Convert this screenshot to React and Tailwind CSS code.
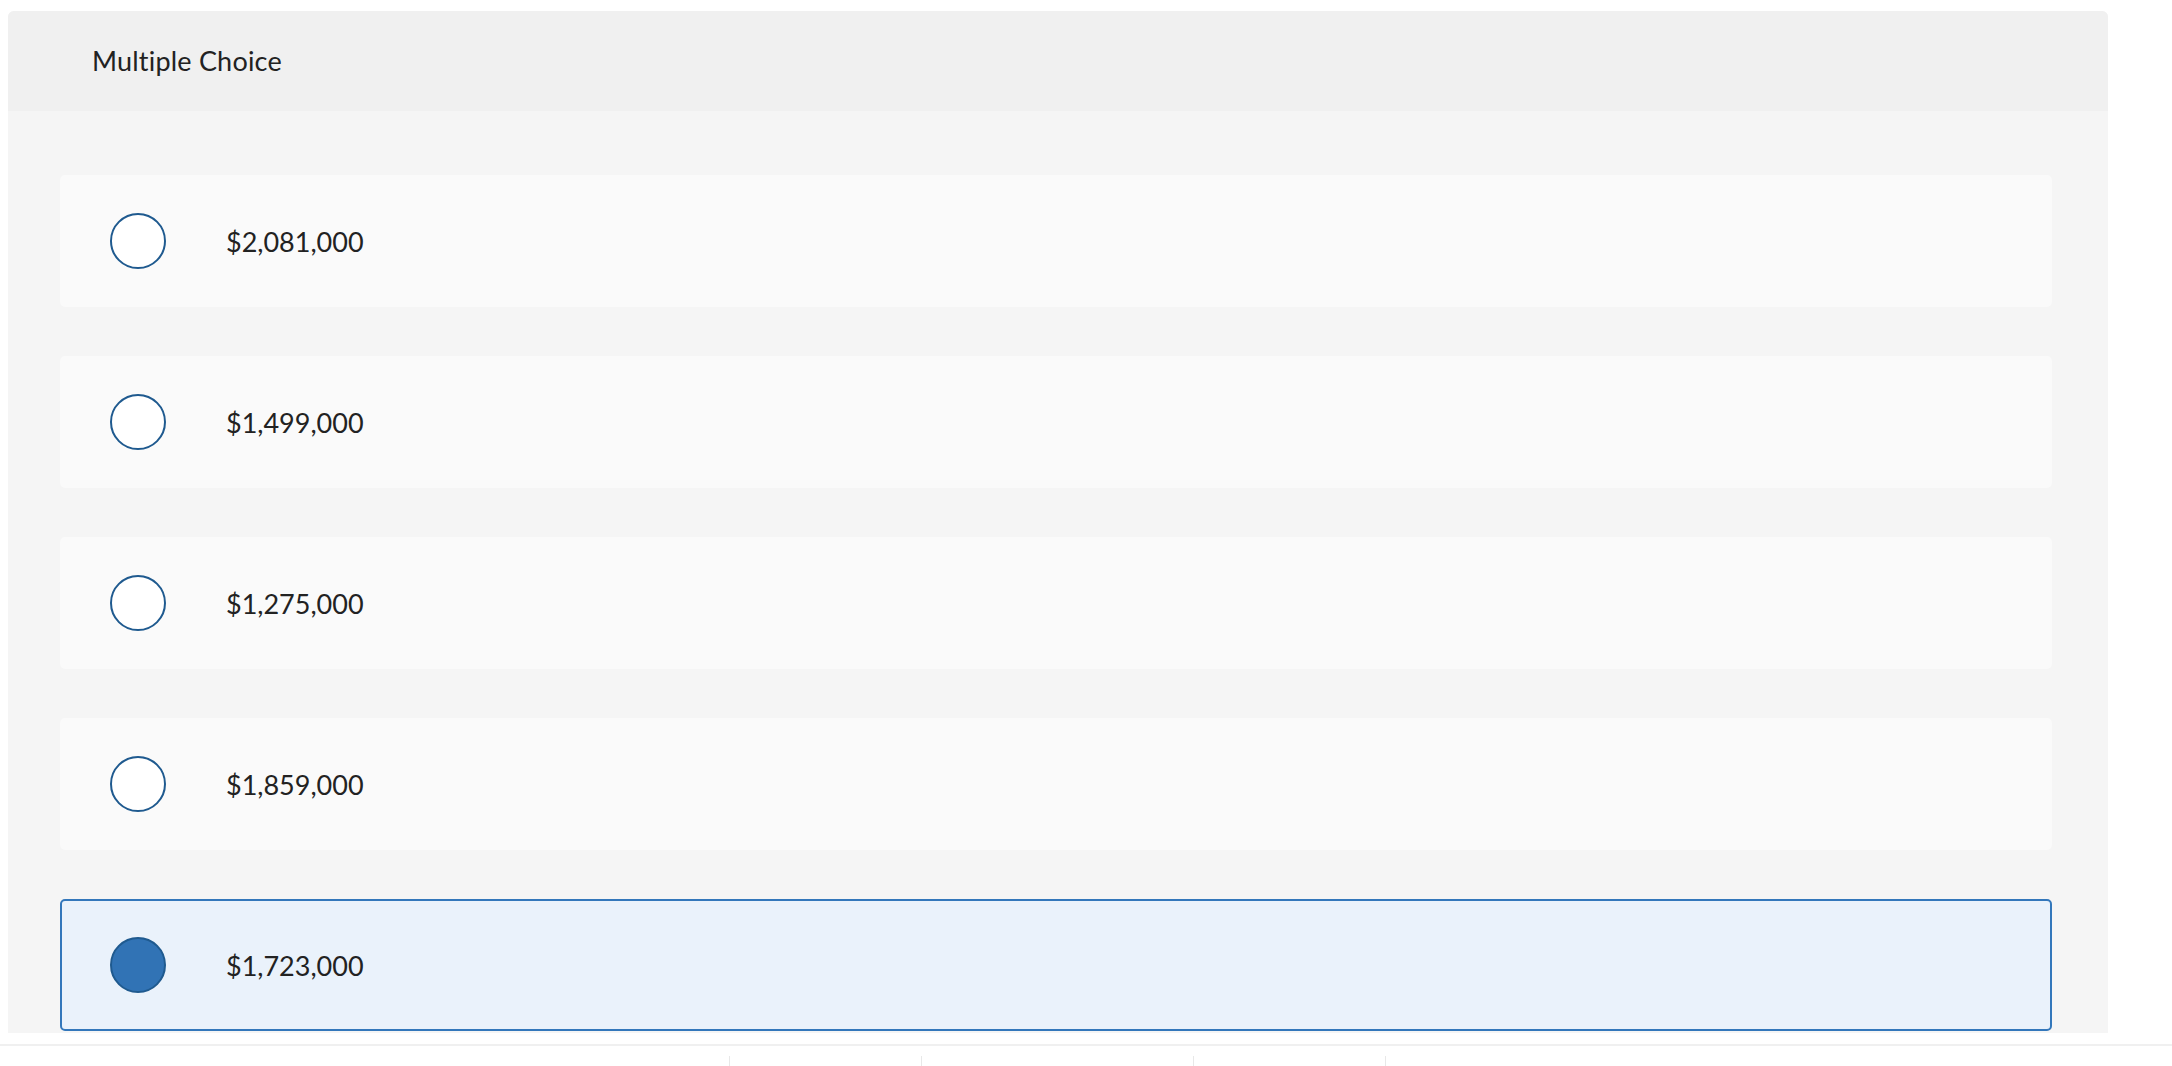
const options = [
  { label: "$2,081,000", selected: false },
  { label: "$1,499,000", selected: false },
  { label: "$1,275,000", selected: false },
  { label: "$1,859,000", selected: false },
  { label: "$1,723,000", selected: true },
];

function Option({ label, selected }) {
  return (
    <div
      className={
        selected
          ? "flex h-[132px] shrink-0 items-center rounded-[5px] border-2 border-[#3377bb] bg-[#eaf2fb] pl-[48px]"
          : "flex h-[132px] shrink-0 items-center rounded-[5px] bg-[#fafafa] pl-[50px]"
      }
    >
      <span
        className={
          selected
            ? "h-[56px] w-[56px] shrink-0 rounded-full border-2 border-[#1f5a8f] bg-[#3173b5]"
            : "h-[56px] w-[56px] shrink-0 rounded-full border-2 border-[#1f5a8f] bg-white"
        }
      />
      <span className="ml-[60px] mt-[2px] text-[27px] text-[#222]">{label}</span>
    </div>
  );
}

export default function App() {
  return (
    <div
      className="h-[1066px] w-full overflow-hidden bg-white"
      style={{ fontFamily: "Lato, 'Open Sans', sans-serif" }}
    >
      <div className="pl-[8px] pt-[11px]">
        {/* question panel */}
        <div className="h-[1022px] w-[2100px] overflow-hidden rounded-t-[6px] bg-[#f5f5f5]">
          <div className="flex h-[100px] items-center bg-[#f0f0f0] pl-[84px]">
            <span className="text-[27px] tracking-[0.2px] text-[#222]">Multiple Choice</span>
          </div>
          <div className="flex flex-col gap-[49px] pl-[52px] pr-[56px] pt-[64px]">
            {options.map((o) => (
              <Option key={o.label} {...o} />
            ))}
          </div>
        </div>
      </div>

      {/* footer strip */}
      <div className="mt-[11px] h-[2px] w-full bg-[#f0f0f0]" />
      <div className="mt-[10px] flex h-[12px]">
        <div className="w-[729px]" />
        <div className="w-[192px] border-l border-[#e8e8e8]" />
        <div className="w-[272px] border-l border-[#e8e8e8]" />
        <div className="w-[192px] border-l border-[#e8e8e8]" />
        <div className="border-l border-[#e8e8e8]" />
      </div>
    </div>
  );
}
